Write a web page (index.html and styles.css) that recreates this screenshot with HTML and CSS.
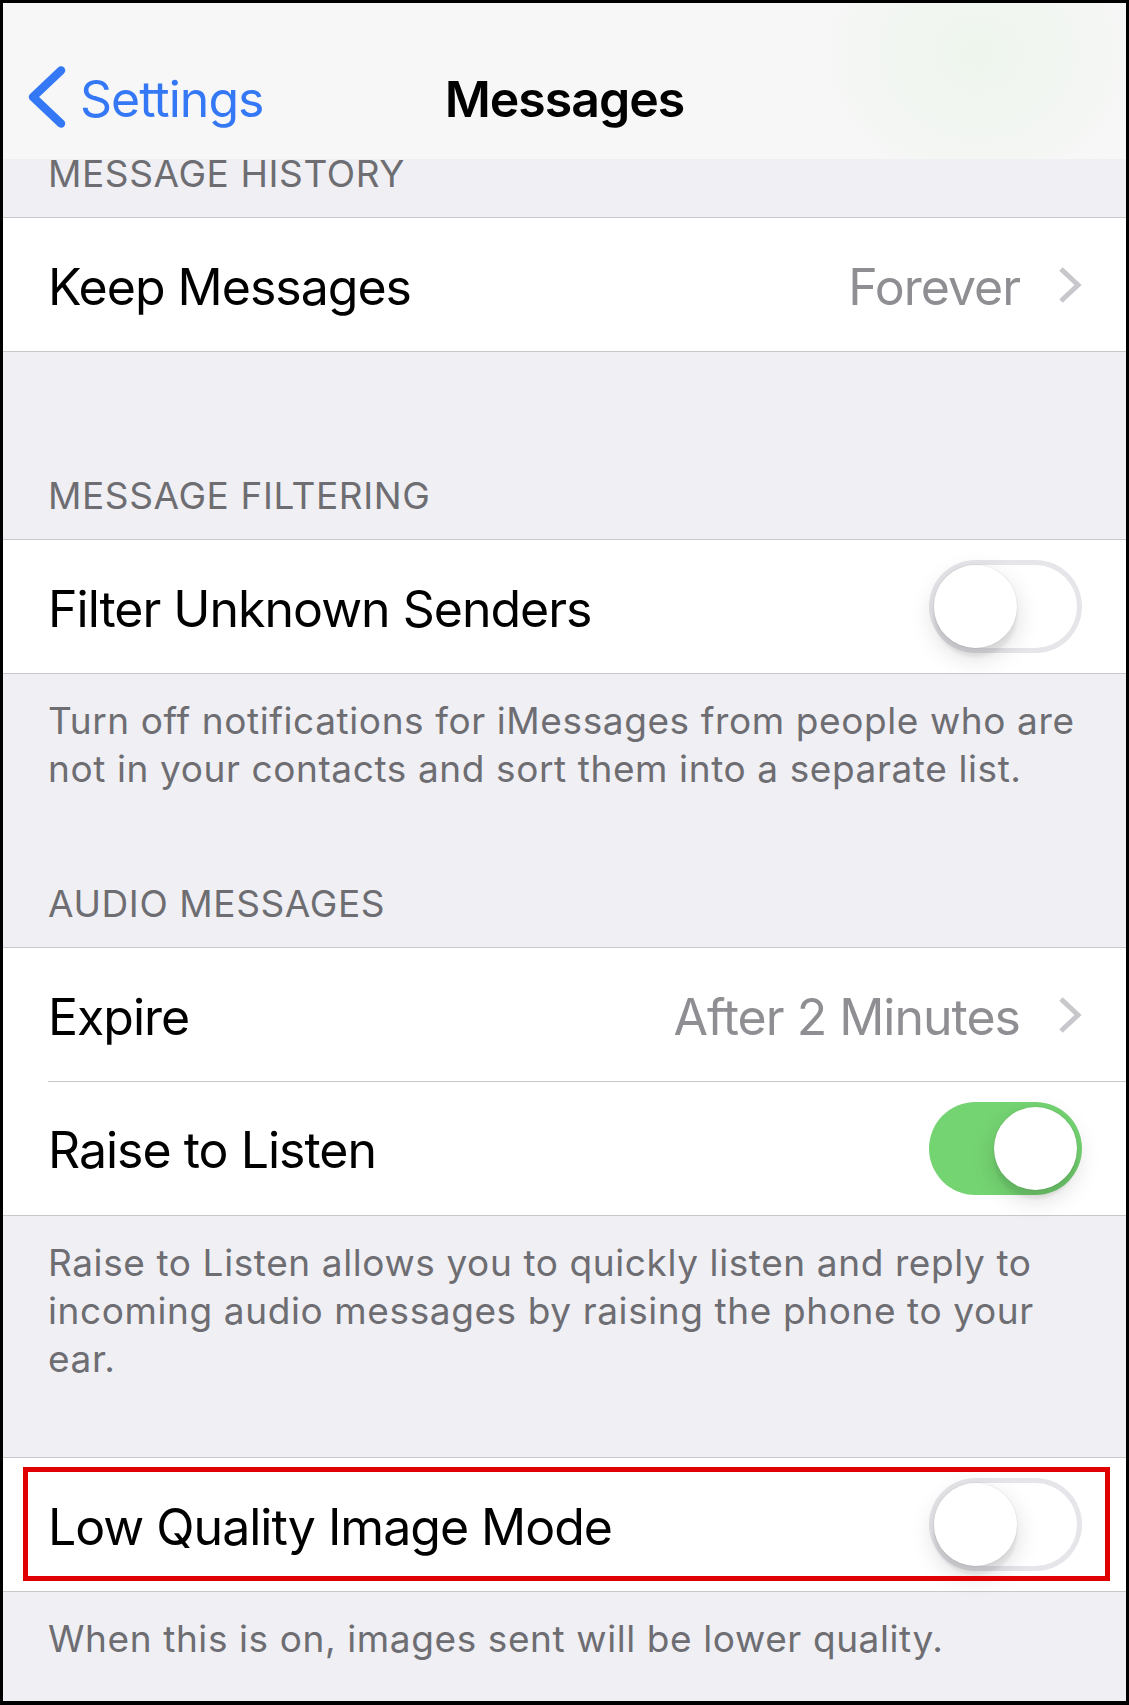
FILE: index.html
```html
<!DOCTYPE html>
<html lang="en">
<head>
    <meta charset="UTF-8">
    <meta name="viewport" content="width=device-width, initial-scale=1.0">
    <title>Messages</title>
    <link rel="stylesheet" href="styles.css">
</head>
<body>
    <div class="screen">
        <header class="navbar">
            <a class="back" href="#">
                <svg class="back-chevron" width="38" height="62" viewBox="0 0 38 62">
                    <path d="M33 4.5 L5 31 L33 57.5" fill="none" stroke="#3478f6" stroke-width="8.5" stroke-linecap="round" stroke-linejoin="round"/>
                </svg>
                <span>Settings</span>
            </a>
            <h1 class="title">Messages</h1>
            <div></div>
        </header>

        <main class="settings">
            <div class="section-header first">MESSAGE HISTORY</div>
            <ul class="group">
                <li class="cell">
                    <span class="label">Keep Messages</span>
                    <span class="detail">Forever</span>
                    <svg class="chevron" width="24" height="38" viewBox="0 0 24 38">
                        <path d="M3 3 L20 19 L3 35" fill="none" stroke="#c7c7cc" stroke-width="5"/>
                    </svg>
                </li>
            </ul>

            <div class="section-header">MESSAGE FILTERING</div>
            <ul class="group">
                <li class="cell">
                    <span class="label">Filter Unknown Senders</span>
                    <span class="switch"><span class="knob"></span></span>
                </li>
            </ul>
            <p class="section-footer">Turn off notifications for iMessages from people who are<br>not in your contacts and sort them into a separate list.</p>

            <div class="section-header">AUDIO MESSAGES</div>
            <ul class="group">
                <li class="cell">
                    <span class="label">Expire</span>
                    <span class="detail">After 2 Minutes</span>
                    <svg class="chevron" width="24" height="38" viewBox="0 0 24 38">
                        <path d="M3 3 L20 19 L3 35" fill="none" stroke="#c7c7cc" stroke-width="5"/>
                    </svg>
                </li>
                <li class="cell">
                    <span class="label">Raise to Listen</span>
                    <span class="switch on"><span class="knob"></span></span>
                </li>
            </ul>
            <p class="section-footer">Raise to Listen allows you to quickly listen and reply to<br>incoming audio messages by raising the phone to your<br>ear.</p>

            <ul class="group">
                <li class="cell highlighted">
                    <span class="label">Low Quality Image Mode</span>
                    <span class="switch"><span class="knob"></span></span>
                </li>
            </ul>
            <p class="section-footer">When this is on, images sent will be lower quality.</p>
        </main>
    </div>
</body>
</html>
```

FILE: styles.css
```css
* {
    box-sizing: border-box;
}
body {
    margin: 0;
    font-family: Inter, "Noto Sans", sans-serif;
    background: #000;
}
.screen {
    width: 1129px;
    height: 1705px;
    border: solid #000;
    border-width: 3px 3px 4px 3px;
    background: #efeff4;
    overflow: hidden;
}

/* navigation bar */
.navbar {
    display: grid;
    grid-template-columns: 1fr auto 1fr;
    align-items: center;
    height: 156px;
    padding: 66px 0 30px;
    background:
        radial-gradient(ellipse 170px 150px at 975px 50px, rgba(222, 242, 220, 0.4), rgba(222, 242, 220, 0)),
        #f7f7f7;
}
.back {
    display: flex;
    align-items: center;
    gap: 14px;
    padding-left: 25px;
    color: #3478f6;
    text-decoration: none;
    font-size: 50px;
    line-height: 60px;
    letter-spacing: -1px;
}
.back-chevron {
    margin-top: -4px;
}
.title {
    margin: 0;
    font-size: 50px;
    line-height: 60px;
    font-weight: 600;
    letter-spacing: -1px;
    color: #000;
}

/* grouped table */
.section-header {
    padding: 22px 45px 28px;
    font-size: 37px;
    line-height: 30px;
    letter-spacing: 0.6px;
    color: #6d6d72;
}
.section-header.first {
    padding-top: 0;
}
.group + .section-header {
    padding-top: 129px;
}
.group {
    list-style: none;
    margin: 0;
    padding: 0;
    background: #fff;
    border-top: 1px solid #c8c7cc;
    border-bottom: 1px solid #c8c7cc;
}
.cell {
    position: relative;
    display: flex;
    align-items: center;
    height: 133px;
    padding: 0 44px 0 45px;
}
.cell + .cell {
    height: 134px;
}
.cell + .cell::before {
    content: "";
    position: absolute;
    top: 0;
    left: 45px;
    right: 0;
    border-top: 1px solid #c8c7cc;
}
.label {
    flex: 1;
    padding-top: 4px;
    font-size: 50px;
    line-height: 60px;
    letter-spacing: -1px;
    color: #000;
}
.detail {
    padding-top: 4px;
    margin-right: 38px;
    font-size: 50px;
    line-height: 60px;
    letter-spacing: -1px;
    color: #8e8e93;
}
.chevron {
    flex-shrink: 0;
}

/* toggle switch */
.switch {
    display: flex;
    align-items: center;
    width: 153px;
    height: 93px;
    padding: 5px;
    border-radius: 47px;
    background: #fff;
    box-shadow: inset 0 0 0 5px #e5e5ea;
}
.switch.on {
    justify-content: flex-end;
    background: #75d472;
    box-shadow: none;
}
.knob {
    width: 83px;
    height: 83px;
    border-radius: 50%;
    background: #fff;
    box-shadow: 0 9px 24px rgba(0, 0, 0, 0.15), 0 9px 3px rgba(0, 0, 0, 0.06), 0 0 0 1px rgba(0, 0, 0, 0.04);
}

.section-footer {
    margin: 0;
    padding: 23px 45px 74px;
    font-size: 37px;
    line-height: 48px;
    letter-spacing: 0.6px;
    color: #6d6d72;
}

/* red outline drawn over the last row */
.highlighted::after {
    content: "";
    position: absolute;
    top: 9px;
    left: 20px;
    right: 16px;
    bottom: 10px;
    border: 5px solid #e10000;
}
```
